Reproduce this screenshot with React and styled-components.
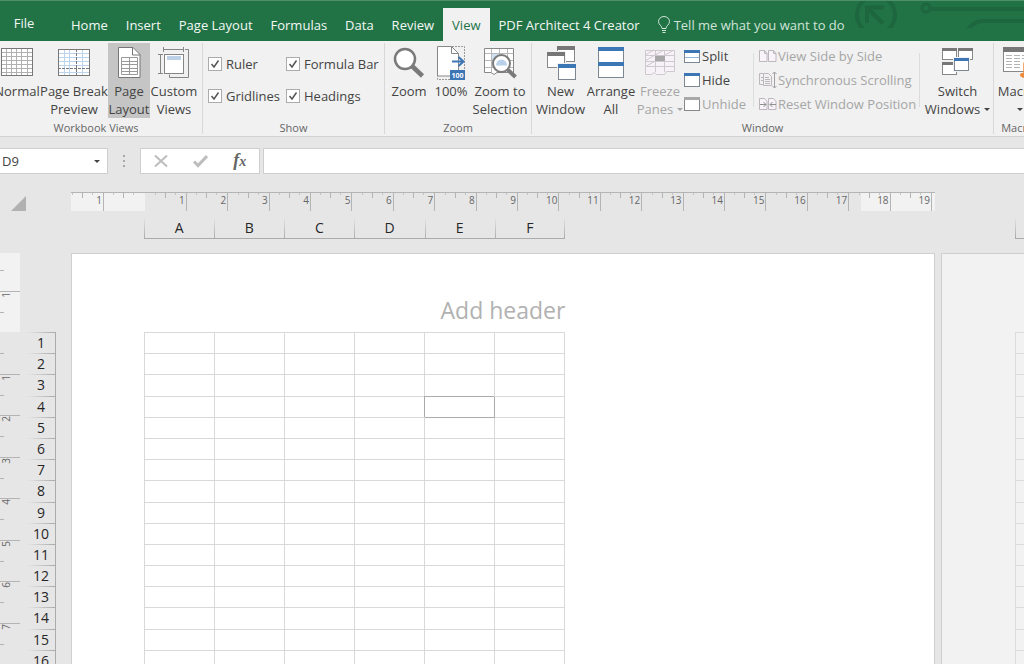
import React from 'react';
import styled, { createGlobalStyle } from 'styled-components';

const GlobalStyle = createGlobalStyle`
  * {
    box-sizing: border-box;
  }

  body {
    margin: 0;
    background: #e6e6e6;
    color: #444444;
    font-family: 'Open Sans', 'Noto Sans', sans-serif;
    font-size: 13px;
    overflow: hidden;
  }

  button,
  input {
    font: inherit;
    color: inherit;
  }

  button {
    padding: 0;
    border: 0;
    background: none;
  }

  svg {
    display: block;
    flex: none;
  }
`;

// Data
const tabs = ['Home', 'Insert', 'Page Layout', 'Formulas', 'Data', 'Review', 'View', 'PDF Architect 4 Creator'];
const columns = ['A', 'B', 'C', 'D', 'E', 'F'];
const rows = Array.from({ length: 16 }, (_, i) => i + 1);
const rulerMarks = ['1', '', ...Array.from({ length: 19 }, (_, i) => String(i + 1))];
const sideMarks = ['', '1', '2', '3', '4', '5', '6', '7'];

const showOptions = [
  { id: 'ruler', label: 'Ruler' },
  { id: 'formula-bar', label: 'Formula Bar' },
  { id: 'gridlines', label: 'Gridlines' },
  { id: 'headings', label: 'Headings' }
];

// Layout
const Page = styled.div`
  display: flex;
  flex-direction: column;
  height: 100vh;
  overflow: hidden;
`;

const TabBar = styled.header`
  position: relative;
  display: flex;
  align-items: flex-end;
  flex: none;
  height: 41px;
  border-top: 1px solid #4d8f6b;
  background: #217346;
  color: #f3f8f5;
  white-space: nowrap;
`;

const FileTab = styled.button`
  width: 62px;
  height: 36px;
  padding-right: 14px;
`;

const Tab = styled.button`
  height: 33px;
  padding: 0 9px;
  background: ${({ $active }) => ($active ? '#f1f1f1' : 'transparent')};
  color: ${({ $active }) => ($active ? '#217346' : 'inherit')};
`;

const TellMe = styled.button`
  display: flex;
  align-items: center;
  gap: 4px;
  height: 33px;
  margin-left: 9px;
  color: #cfe3d8;
`;

const Circuit = styled.svg`
  position: absolute;
  top: 0;
  right: 0;
`;

const Ribbon = styled.div`
  display: flex;
  flex: none;
  height: 96px;
  padding-top: 2px;
  border-bottom: 1px solid #d2d2d2;
  background: #f1f1f1;
  overflow: hidden;
`;

const Group = styled.section`
  display: flex;
  flex-direction: column;
  flex: none;
  margin-left: ${({ $scrolled }) => ($scrolled ? '-10px' : '0')};
  padding: 0 ${({ $pad }) => $pad || 3}px;
  border-right: 1px solid #d8d8d8;
  margin-bottom: 2px;
`;

const GroupBody = styled.div`
  display: flex;
  flex: none;
  height: 75px;
`;

const GroupLabel = styled.div`
  font-size: 11px;
  line-height: 20px;
  text-align: center;
  color: #666666;
`;

const BigButton = styled.button`
  display: flex;
  flex-direction: column;
  align-items: center;
  width: ${({ $width }) => $width}px;
  height: 75px;
  padding-top: 3px;
  line-height: 18px;
  white-space: nowrap;
  background: ${({ $active }) => ($active ? '#c5c5c5' : 'transparent')};
  color: ${({ $muted }) => ($muted ? '#a6a6a6' : 'inherit')};
`;

const IconSlot = styled.span`
  height: 36px;
`;

const LabelLine = styled.span`
  display: flex;
  align-items: center;
  gap: 4px;
  min-height: 18px;
`;

const Caret = styled.span`
  border: 3px solid transparent;
  border-top-color: currentColor;
  border-bottom: 0;
`;

const CheckGrid = styled.div`
  display: grid;
  grid-template-columns: 78px 95px;
  grid-template-rows: 32px 32px;
  padding: 5px 0 0 2px;
`;

const CheckLabel = styled.label`
  display: flex;
  align-items: center;
  gap: 4px;
  white-space: nowrap;
`;

const CheckBox = styled.input`
  appearance: none;
  flex: none;
  width: 14px;
  height: 14px;
  margin: 0;
  border: 1px solid #ababab;
  background: #ffffff
    url("data:image/svg+xml,%3Csvg xmlns='http://www.w3.org/2000/svg' viewBox='0 0 12 12'%3E%3Cpath d='M2.5 6l2.5 3 4.500-6.500' fill='none' stroke='%23555' stroke-width='1.500'/%3E%3C/svg%3E")
    center / 12px no-repeat;
`;

const SmallList = styled.div`
  display: flex;
  flex-direction: column;
  width: ${({ $width }) => $width}px;
  padding-top: 1px;
`;

const SmallButton = styled.button`
  display: flex;
  align-items: center;
  gap: 1px;
  height: 24px;
  white-space: nowrap;
  color: ${({ $muted }) => ($muted ? '#a6a6a6' : 'inherit')};
`;

const Separator = styled.div`
  width: 1px;
  height: 54px;
  margin: 10px 5px 0 0;
  background: #dcdcdc;
`;

// Formula bar
const FormulaRow = styled.div`
  display: flex;
  align-items: stretch;
  flex: none;
  height: 37px;
  padding-top: 11px;
`;

const NameBox = styled.div`
  display: flex;
  align-items: center;
  width: 108px;
  padding-right: 7px;
  border: 1px solid #cfcfcf;
  border-left: 0;
  background: #ffffff;
`;

const NameInput = styled.input`
  flex: 1;
  min-width: 0;
  padding: 0 2px;
  border: 0;
  outline: 0;
`;

const Grip = styled.div`
  display: flex;
  flex-direction: column;
  align-items: center;
  justify-content: center;
  gap: 3px;
  width: 32px;

  span {
    width: 2px;
    height: 2px;
    background: #a8a8a8;
  }
`;

const FormulaTools = styled.div`
  display: flex;
  align-items: center;
  justify-content: space-around;
  width: 120px;
  margin-right: 3px;
  border: 1px solid #cfcfcf;
  background: #ffffff;
`;

const FxButton = styled.button`
  font-family: 'Liberation Serif', serif;
  font-size: 18px;
  font-style: italic;
  font-weight: bold;
  line-height: 20px;
  color: #666666;

  sub {
    font-size: 14px;
    vertical-align: baseline;
  }
`;

const FormulaInput = styled.input`
  flex: 1;
  min-width: 0;
  border: 1px solid #cfcfcf;
  border-right: 0;
  background: #ffffff;
  outline: 0;
`;

// Sheet area
const HeadArea = styled.div`
  display: flex;
  flex: none;
  height: 79px;
  padding-top: 18px;
`;

const Corner = styled.button`
  display: flex;
  align-items: flex-start;
  flex: none;
  width: 71px;
  padding: 4px 0 0 11px;
`;

const RulerColumn = styled.div`
  flex: none;
  width: 864px;
`;

const Ruler = styled.div`
  display: grid;
  grid-template-columns: 33px repeat(20, 1fr);
  height: 19px;
  padding-right: 3px;
  border-top: 1px solid #b4b4b4;
  background: linear-gradient(90deg, #f2f2f2 74px, #e6e6e6 74px calc(100% - 74px), #f2f2f2 calc(100% - 74px));
`;

const RulerMark = styled.div`
  padding-right: 1px;
  border-right: 1px solid ${({ $empty }) => ($empty ? 'transparent' : '#b4b4b4')};
  background:
    linear-gradient(#b4b4b4, #b4b4b4) right 20px top / 1px 5px no-repeat,
    linear-gradient(#c4c4c4, #c4c4c4) right 10px top / 1px 2px no-repeat,
    linear-gradient(#c4c4c4, #c4c4c4) right 30px top / 1px 2px no-repeat;
  font-size: 10px;
  line-height: 14px;
  text-align: right;
  color: #666666;
`;

const ColumnHeads = styled.div`
  display: grid;
  grid-template-columns: repeat(6, 1fr);
  width: 421px;
  height: 22px;
  margin: 6px 0 0 73px;
  border-bottom: 1px solid #ababab;
  background: linear-gradient(#e6e6e6, #ababab) right / 1px 100% no-repeat;
`;

const ColumnHead = styled.div`
  background: linear-gradient(#e6e6e6, #ababab) left / 1px 100% no-repeat;
  font-size: 14px;
  line-height: 22px;
  text-align: center;
  color: #262626;
`;

const NextHeads = styled.div`
  flex: 1;
  height: 22px;
  margin: 25px 0 0 80px;
  border-bottom: 1px solid #ababab;
  background: linear-gradient(#e6e6e6, #ababab) left / 1px 100% no-repeat;
`;

const Work = styled.main`
  display: flex;
  flex: 1;
  min-height: 0;
  overflow: hidden;
`;

const SideRuler = styled.div`
  flex: none;
  width: 20px;
  margin-right: 7px;
`;

const SideMargin = styled.div`
  height: 79px;
  padding-top: 38px;
  background:
    linear-gradient(#b4b4b4, #b4b4b4) left 0 top 17px / 4px 1px no-repeat,
    linear-gradient(#b4b4b4, #b4b4b4) left 0 top 59px / 4px 1px no-repeat,
    #f2f2f2;
`;

const SideMarks = styled.div`
  display: grid;
  grid-template-rows: repeat(8, 1fr);
  height: 332px;
`;

const SideMark = styled.div`
  height: 100%;
  border-top: 1px solid ${({ $empty }) => ($empty ? 'transparent' : '#b4b4b4')};
  background: linear-gradient(#b4b4b4, #b4b4b4) left 0 top 20px / 4px 1px no-repeat;

  span {
    display: block;
    width: 12px;
    padding-top: 2px;
    writing-mode: vertical-rl;
    transform: rotate(180deg);
    font-size: 10px;
    line-height: 12px;
    text-align: right;
    color: #666666;
  }
`;

const RowHeads = styled.div`
  display: grid;
  grid-template-rows: repeat(16, minmax(0, 1fr));
  flex: none;
  width: 29px;
  height: 339px;
  margin: 79px 15px 0 0;
  border-right: 1px solid #ababab;
`;

const RowHead = styled.div`
  background: linear-gradient(90deg, #e6e6e6, #ababab) top / 100% 1px no-repeat;
  font-size: 14px;
  line-height: 22px;
  text-align: center;
  color: #262626;
`;

const Sheet = styled.div`
  flex: none;
  width: 864px;
  border: 1px solid #cfcfcf;
  border-bottom: 0;
  background: #ffffff;
`;

const HeaderSlot = styled.button`
  display: block;
  width: 100%;
  height: 78px;
  padding-top: 34px;
  font-size: 23px;
  color: #b1b1b1;
`;

const Cells = styled.table`
  display: grid;
  width: 421px;
  height: 339px;
  margin-left: 72px;
  border-right: 1px solid #d9d9d9;

  tbody {
    display: grid;
    grid-template-rows: repeat(16, 1fr);
  }

  tr {
    display: grid;
    grid-template-columns: repeat(6, 1fr);
  }
`;

const Cell = styled.td`
  position: relative;
  z-index: ${({ $selected }) => ($selected ? 1 : 0)};
  padding: 0;
  border: 1px solid ${({ $selected }) => ($selected ? '#ababab' : '#d9d9d9')};
  border-width: 1px 0 0 1px;
  box-shadow: ${({ $selected }) => ($selected ? '1px 1px 0 #ababab' : 'none')};
`;

const NextSheet = styled.div`
  flex: 1;
  margin-left: 6px;
  padding: 78px 0 0 73px;
  border: 1px solid #cfcfcf;
  border-width: 1px 0 0 1px;
  background: #f2f2f2;
`;

const NextCells = styled.div`
  display: grid;
  grid-template-rows: repeat(16, 1fr);
  height: 339px;
  border-left: 1px solid #dcdcdc;

  div {
    border-top: 1px solid #dcdcdc;
  }
`;

// Icons
const NormalIcon = () => (
  <svg width="32" height="34" fill="none" stroke="#b0b0b0">
    <rect x="0.5" y="2.500" width="31" height="27" fill="#fff" stroke="#777" />
    <path d="M1 6.500h30M1 10.500h30M1 14.500h30M1 18.500h30M1 22.500h30M1 26.500h30M5.500 3v26M10.500 3v26M15.500 3v26M20.500 3v26M26.500 3v26" />
  </svg>
);

const PageBreakIcon = () => (
  <svg width="32" height="34" fill="none">
    <rect x="0.5" y="3.500" width="31" height="26" fill="#fff" stroke="#777" />
    <path d="M1 7.500h30M1 11.500h30M1 15.500h30M1 19.500h30M1 26.500h30M6.500 4v25M11.500 4v25M24.500 4v25" stroke="#bcd3ec" />
    <path d="M18.500 3v27M0 22.500h32" stroke="#777" strokeDasharray="3 1" />
  </svg>
);

const PageLayoutIcon = () => (
  <svg width="26" height="34" fill="none" stroke="#777">
    <path d="M2.500 1.500H17l7 7v23h-21.500z" fill="#fff" />
    <path d="M16.500 1.500v7.500h7.500" />
    <path d="M5.500 11.500h16v17h-16zM5 15.500h17M5 18.500h17M5 22.500h17M5 25.500h17M13.500 11v18" stroke="#999" />
  </svg>
);

const CustomViewsIcon = () => (
  <svg width="34" height="34" fill="none" stroke="#858585">
    <path d="M6.500 1v5M26.500 1v5M7 3.500h20M1 8.500h5M1 27.500h5M3.500 9v18M28 3.500h3.500v28h-19v-3" />
    <rect x="7.500" y="8.500" width="19" height="19" fill="#fff" />
    <path d="M10 12h14" stroke="#bcd0e8" strokeWidth="4" />
  </svg>
);

const ZoomIcon = () => (
  <svg width="32" height="34" fill="none" stroke="#7a7a7a">
    <circle cx="12" cy="13" r="10" fill="#fff" strokeWidth="2.500" />
    <path d="M19.500 20.500l10 9.500" strokeWidth="4.500" />
  </svg>
);

const HundredIcon = () => (
  <svg width="30" height="36" fill="none">
    <path d="M16 0.500h12.500v33H1.500v-3" stroke="#999" strokeDasharray="2 1" />
    <path d="M1.500 0.500h14l7 7v22.500h-21z" fill="#fff" stroke="#888" />
    <path d="M15.500 0.500v7h7" stroke="#888" />
    <path d="M16 15.500h11M22.500 11l5 4.500-5 4.500" stroke="#3c76b5" strokeWidth="2" />
    <path d="M14 24h15v10H14z" fill="#3c76b5" />
    <text x="21.500" y="32" fontSize="7" fontWeight="bold" textAnchor="middle" fill="#fff">100</text>
  </svg>
);

const ZoomSelectionIcon = () => (
  <svg width="34" height="34" fill="none">
    <path d="M1.500 2.500h29v24H14l-3 2-3-2H1.500z" fill="#fff" stroke="#888" />
    <path d="M9 8h8v14H9z" fill="#cfe0f2" />
    <path d="M2 7.500h28M2 14.500h28M2 21.500h28M8.500 3v23M16.500 3v23M24.500 3v23" stroke="#b8b8b8" />
    <circle cx="18.500" cy="17.500" r="8.500" fill="#fff" stroke="#7a7a7a" strokeWidth="2" />
    <path d="M13 19.500a5.500 6 0 0 1 11 0z" fill="#b9d0ea" />
    <path d="M25 24l7.500 7" stroke="#7a7a7a" strokeWidth="4" />
  </svg>
);

// A small window with a coloured title bar
const MiniWindow = ({ x, y, w, h, color, bar = 3 }) => (
  <g>
    <rect x={x + 0.5} y={y + 0.5} width={w - 1} height={h - 1} fill="#fff" stroke={color === '#3c76b5' ? '#7d8791' : '#888'} />
    <rect x={x} y={y} width={w} height={bar} fill={color} />
  </g>
);

const NewWindowIcon = () => (
  <svg width="30" height="34">
    <MiniWindow x={11} y={0} w={18} h={16} color="#777777" bar={4} />
    <path d="M0 5h20v18H0z" fill="#f1f1f1" />
    <MiniWindow x={1} y={6} w={18} h={16} color="#777777" bar={4} />
    <path d="M11 17h20v17H11z" fill="#f1f1f1" />
    <MiniWindow x={12} y={18} w={18} h={16} color="#3c76b5" bar={4} />
  </svg>
);

const ArrangeIcon = () => (
  <svg width="28" height="34">
    <MiniWindow x={1} y={1} w={26} h={16} color="#3c76b5" bar={4} />
    <MiniWindow x={1} y={16} w={26} h={16} color="#3c76b5" bar={4} />
  </svg>
);

const FreezeIcon = () => (
  <svg width="32" height="34" fill="none" stroke="#cfc8cf">
    <path d="M1.500 4.500h29v21h-8l-2 3h-8l-2-2-3 2h-6z" fill="#f7f2f7" />
    <path d="M1 9.500h29M1 15.500h29M1 20.500h29M11.500 4v22M20.500 4v22M1 9l9-5M1 15l10-6M1 21l10-6M11 9l9-5M21 9l9-5" />
    <path d="M11 10h10v5H11z" fill="#a8a8a8" stroke="none" />
  </svg>
);

const SwitchIcon = () => (
  <svg width="34" height="34">
    <MiniWindow x={1} y={2} w={15} height={12} h={12} color="#777777" />
    <MiniWindow x={17} y={2} w={15} h={12} color="#777777" />
    <MiniWindow x={1} y={16} w={15} h={13} color="#777777" />
    <path d="M12 11h17v15H12z" fill="#f1f1f1" />
    <MiniWindow x={13} y={12} w={15} h={13} color="#3c76b5" />
  </svg>
);

const MacrosIcon = () => (
  <svg width="34" height="36">
    <MiniWindow x={0} y={1} w={32} h={25} color="#777777" bar={5} />
    <path d="M3 9.500h6M3 12.500h6M3 15.500h6M3 18.500h6M3 21.500h6M11 9.500h6M11 12.500h6M11 15.500h6M11 18.500h6M11 21.500h6M19 9.500h6M19 12.500h6" stroke="#b4b4b4" />
    <path d="M21 28V18c0-2 2-2 3-2h9v15H20z" fill="#fbeee2" stroke="#ed8b3b" strokeWidth="1.500" />
    <rect x="17" y="27" width="16" height="4" rx="2" fill="#ed8b3b" />
  </svg>
);

const SplitIcon = () => (
  <svg width="17" height="15">
    <MiniWindow x={0} y={1} w={16} h={13} color="#3c76b5" />
    <path d="M1 8.500h14" stroke="#8fb4dc" />
  </svg>
);

const WindowIcon = ({ color }) => (
  <svg width="17" height="16">
    <MiniWindow x={0} y={1} w={16} h={14} color={color} />
  </svg>
);

const SideBySideIcon = () => (
  <svg width="18" height="14" fill="#f9f4f9" stroke="#bdb6bd">
    <path d="M0.500 1.500h5l2.500 3v8h-7.500zM9.500 1.500h5l2.500 3v8h-7.500zM5.500 1.500v3h2.500M14.500 1.500v3h2.500" />
  </svg>
);

const SyncIcon = () => (
  <svg width="18" height="18" fill="none" stroke="#bdb6bd">
    <path d="M4 2.500h-3.500v11h4M4.500 2.500h5l3 3v9h-8zM6 6.500h4M6 8.500h5M6 10.500h5M6 12.500h5M2 6.500h2M2 9.500h2" />
    <path d="M15.500 1v16M13.500 3l2-2 2 2M13.500 15l2 2 2-2" stroke="#a0a0a0" />
  </svg>
);

const ResetIcon = () => (
  <svg width="18" height="14" fill="#f9f4f9" stroke="#bdb6bd">
    <path d="M0.500 1.500h5l2.500 3v8h-7.500zM9.500 1.500h5l2.500 3v8h-7.500z" />
    <path d="M1 7.500h6M4.500 5l2.500 2.500-2.500 2.500M17 7.500h-6M13.500 5l-2.500 2.500 2.500 2.500" fill="none" stroke="#8f8f8f" />
  </svg>
);

const BulbIcon = () => (
  <svg width="12" height="18" fill="none" stroke="#cfe3d8">
    <path d="M4 12.500c0-3-3.500-3.500-3.500-7a5.500 5 0 0 1 11 0c0 3.500-3.500 4-3.500 7zM4 14.500h4M4.500 16.500h3" />
  </svg>
);

const CancelIcon = () => (
  <svg width="14" height="14" stroke="#bdbdbd" strokeWidth="2">
    <path d="M1 1.500l12 11M13 1.500l-12 11" />
  </svg>
);

const AcceptIcon = () => (
  <svg width="15" height="14" fill="none" stroke="#bdbdbd" strokeWidth="3">
    <path d="M1 7.500l4 4L14 2" />
  </svg>
);

const BigItem = ({ icon, lines, width, active, muted, caret }) => (
  <BigButton $width={width} $active={active} $muted={muted} disabled={muted}>
    <IconSlot>{icon}</IconSlot>
    {lines.map((line, index) => (
      <LabelLine key={index}>
        {line}
        {caret && index === lines.length - 1 && <Caret />}
      </LabelLine>
    ))}
  </BigButton>
);

const SmallItem = ({ icon, label, muted }) => (
  <SmallButton $muted={muted} disabled={muted}>
    {icon}
    {label}
  </SmallButton>
);

const App = () => {
  return (
    <Page>
      <GlobalStyle />
      <TabBar>
        <Circuit width="170" height="27" fill="none" stroke="#1e663e" aria-hidden="true">
          <circle cx="22" cy="14" r="19" strokeWidth="4" />
          <path d="M13 22V6.500h17M14 7.500l15 15" strokeWidth="4" />
          <circle cx="72" cy="7" r="4" strokeWidth="3" />
          <path d="M77 8h93M113 29q8-9 16-9h41" strokeWidth="4" />
        </Circuit>
        <FileTab>File</FileTab>
        {tabs.map((tab) => (
          <Tab key={tab} $active={tab === 'View'}>{tab}</Tab>
        ))}
        <TellMe>
          <BulbIcon />
          Tell me what you want to do
        </TellMe>
      </TabBar>

      <Ribbon>
        <Group $scrolled $pad={4}>
          <GroupBody>
            <BigItem icon={<NormalIcon />} lines={['Normal']} width={46} />
            <BigItem icon={<PageBreakIcon />} lines={['Page Break', 'Preview']} width={68} />
            <BigItem icon={<PageLayoutIcon />} lines={['Page', 'Layout']} width={42} active />
            <BigItem icon={<CustomViewsIcon />} lines={['Custom', 'Views']} width={48} />
          </GroupBody>
          <GroupLabel>Workbook Views</GroupLabel>
        </Group>

        <Group>
          <GroupBody>
            <CheckGrid>
              {showOptions.map((option) => (
                <CheckLabel key={option.id} htmlFor={option.id}>
                  <CheckBox type="checkbox" id={option.id} defaultChecked />
                  {option.label}
                </CheckLabel>
              ))}
            </CheckGrid>
          </GroupBody>
          <GroupLabel>Show</GroupLabel>
        </Group>

        <Group>
          <GroupBody>
            <BigItem icon={<ZoomIcon />} lines={['Zoom']} width={42} />
            <BigItem icon={<HundredIcon />} lines={['100%']} width={42} />
            <BigItem icon={<ZoomSelectionIcon />} lines={['Zoom to', 'Selection']} width={56} />
          </GroupBody>
          <GroupLabel>Zoom</GroupLabel>
        </Group>

        <Group>
          <GroupBody>
            <BigItem icon={<NewWindowIcon />} lines={['New', 'Window']} width={51} />
            <BigItem icon={<ArrangeIcon />} lines={['Arrange', 'All']} width={50} />
            <BigItem icon={<FreezeIcon />} lines={['Freeze', 'Panes']} width={48} muted caret />
            <SmallList $width={69}>
              <SmallItem icon={<SplitIcon />} label="Split" />
              <SmallItem icon={<WindowIcon color="#3c76b5" />} label="Hide" />
              <SmallItem icon={<WindowIcon color="#a8a8a8" />} label="Unhide" muted />
            </SmallList>
            <Separator />
            <SmallList $width={160}>
              <SmallItem icon={<SideBySideIcon />} label="View Side by Side" muted />
              <SmallItem icon={<SyncIcon />} label="Synchronous Scrolling" muted />
              <SmallItem icon={<ResetIcon />} label="Reset Window Position" muted />
            </SmallList>
            <Separator />
            <BigItem icon={<SwitchIcon />} lines={['Switch', 'Windows']} width={65} caret />
          </GroupBody>
          <GroupLabel>Window</GroupLabel>
        </Group>

        <Group>
          <GroupBody>
            <BigItem icon={<MacrosIcon />} lines={['Macros', '']} width={46} caret />
          </GroupBody>
          <GroupLabel>Macros</GroupLabel>
        </Group>
      </Ribbon>

      <FormulaRow>
        <NameBox>
          <NameInput aria-label="Name box" defaultValue="D9" />
          <Caret />
        </NameBox>
        <Grip>
          <span />
          <span />
          <span />
        </Grip>
        <FormulaTools>
          <button aria-label="Cancel"><CancelIcon /></button>
          <button aria-label="Enter"><AcceptIcon /></button>
          <FxButton>f<sub>x</sub></FxButton>
        </FormulaTools>
        <FormulaInput aria-label="Formula bar" />
      </FormulaRow>

      <HeadArea>
        <Corner aria-label="Select all">
          <svg width="15" height="15">
            <path d="M15 0v15H0z" fill="#b1b1b1" />
          </svg>
        </Corner>
        <RulerColumn>
          <Ruler>
            {rulerMarks.map((mark, index) => (
              <RulerMark key={index} $empty={!mark}>{mark}</RulerMark>
            ))}
          </Ruler>
          <ColumnHeads>
            {columns.map((column) => (
              <ColumnHead key={column}>{column}</ColumnHead>
            ))}
          </ColumnHeads>
        </RulerColumn>
        <NextHeads />
      </HeadArea>

      <Work>
        <SideRuler>
          <SideMargin>
            <SideMark><span>1</span></SideMark>
          </SideMargin>
          <SideMarks>
            {sideMarks.map((mark, index) => (
              <SideMark key={index} $empty={!mark}><span>{mark}</span></SideMark>
            ))}
          </SideMarks>
        </SideRuler>
        <RowHeads>
          {rows.map((row) => (
            <RowHead key={row}>{row}</RowHead>
          ))}
        </RowHeads>
        <Sheet>
          <HeaderSlot>Add header</HeaderSlot>
          <Cells>
            <tbody>
              {rows.map((row) => (
                <tr key={row}>
                  {columns.map((column) => (
                    <Cell key={column} $selected={column === 'E' && row === 4} />
                  ))}
                </tr>
              ))}
            </tbody>
          </Cells>
        </Sheet>
        <NextSheet>
          <NextCells>
            {rows.map((row) => (
              <div key={row} />
            ))}
          </NextCells>
        </NextSheet>
      </Work>
    </Page>
  );
};

export default App;
